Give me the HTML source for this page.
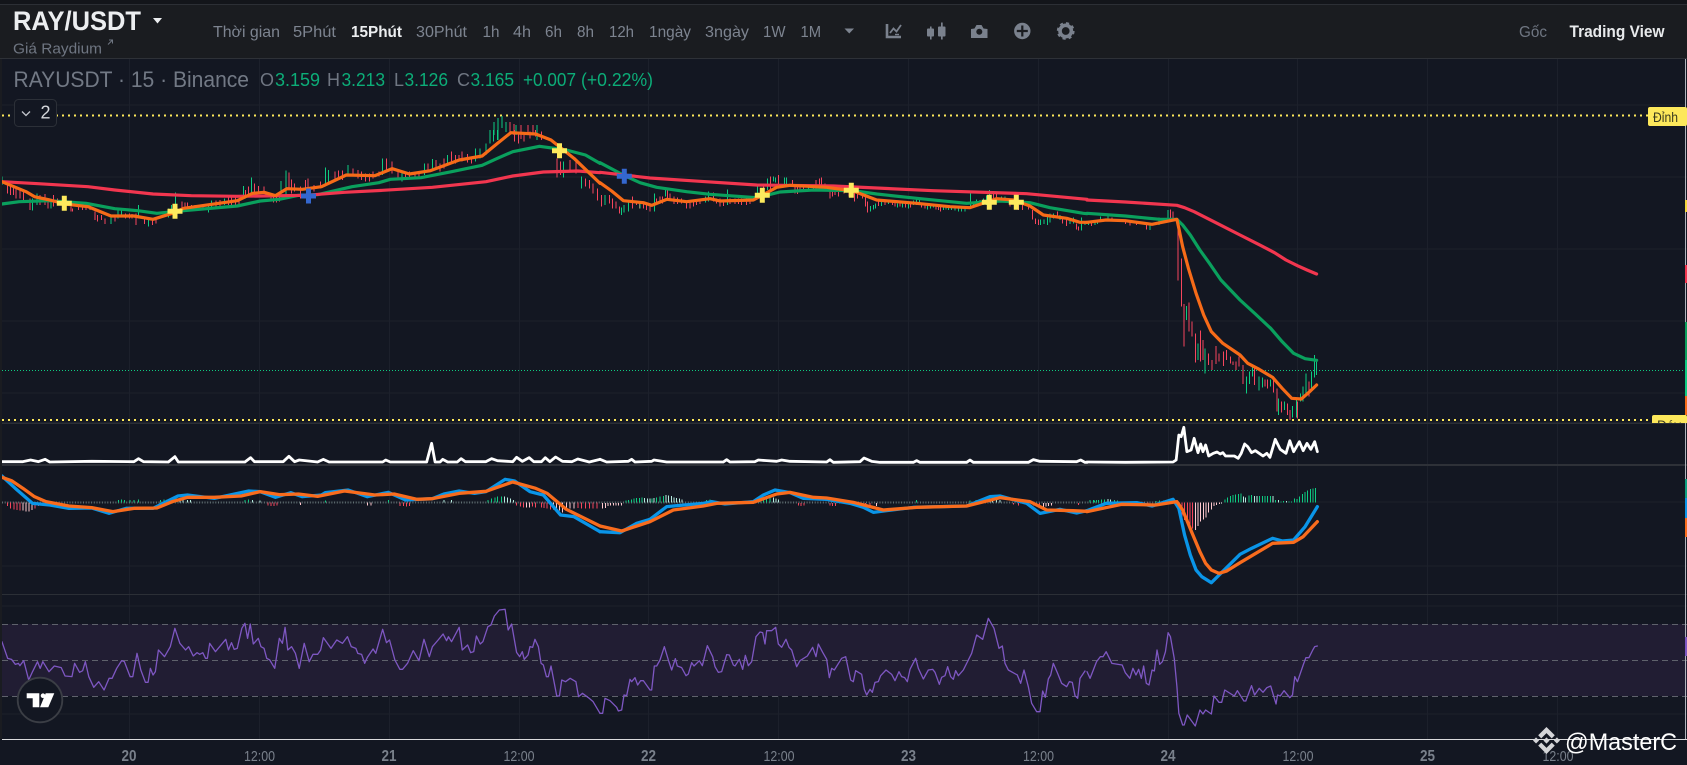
<!DOCTYPE html>
<html lang="vi">
<head>
<meta charset="utf-8">
<title>RAY/USDT</title>
<style>
html,body{margin:0;padding:0;background:#131722;width:1687px;height:765px;overflow:hidden}
svg{display:block}
text{font-family:"Liberation Sans","DejaVu Sans",sans-serif}
.t{font-size:16px;fill:#7d8490}
.a{font-size:15px;fill:#79808b;text-anchor:middle}
.d{font-size:16px;fill:#79808b;text-anchor:middle;font-weight:bold}
.l{font-size:18px;fill:#6f7682}
.g{font-size:18px;fill:#0cad78}
.ns{vector-effect:non-scaling-stroke;fill:none}
.ln{vector-effect:non-scaling-stroke;fill:none;stroke-linejoin:round;stroke-linecap:round}
</style>
</head>
<body>
<svg width="1687" height="765" viewBox="0 0 1687 765" xmlns="http://www.w3.org/2000/svg">
<defs><clipPath id="c1"><rect x="1640" y="410" width="47" height="13"/></clipPath></defs>
<rect width="1687" height="765" fill="#131722"/>

<!-- grid -->
<g stroke="#1c202b" stroke-width="1" shape-rendering="crispEdges">
<path d="M129.5 59V739M259.5 59V739M389.5 59V739M519.5 59V739M648.5 59V739M778.5 59V739M908.5 59V739M1038.5 59V739M1168.5 59V739M1297.5 59V739M1427.5 59V739M1557.5 59V739"/>
<path d="M2 105H1687M2 177H1687M2 249H1687M2 321H1687M2 393H1687M2 502H1687M2 566H1687M2 606H1687M2 642H1687M2 678H1687M2 714H1687"/>
</g>

<!-- RSI band -->
<rect x="2" y="624" width="1685" height="72" fill="#211d33"/>
<g stroke="#5f626c" stroke-width="1" stroke-dasharray="6 4" shape-rendering="crispEdges">
<path d="M2 624.5H1687M2 660.5H1687M2 696.5H1687"/>
</g>

<!-- price lines -->
<path d="M2 115.5H1650" stroke="#fde85b" stroke-width="2" stroke-dasharray="2 4"/>
<path d="M2 420H1654" stroke="#fde85b" stroke-width="2" stroke-dasharray="2 4"/>
<path d="M2 370.5H1685" stroke="#0ecb81" stroke-width="1" stroke-dasharray="1 2"/>

<!-- wicks zoom 3 coords -->
<g transform="translate(0,130) scale(.38265,.33333)" shape-rendering="crispEdges">
<path class="ns" stroke="#f6465d" d="M20 165V190M27 168V195M35 170V195M42 175V205M52 180V205M62 180V210M78 205V240M105 195V225M118 192V225M125 205V235M140 195V230M150 205V225M185 230V245M190 235V245M205 215V240M215 222V240M225 222V240M235 225V240M248 245V270M255 255V275M265 255V270M275 265V282M300 255V275M328 250V265M338 250V265M345 252V265M355 250V285M378 262V282M398 265V285M408 262V280M475 215V235M483 218V235M490 218V240M500 225V240M510 225V240M520 225V240M530 225V240M565 212V235M575 210V235M597 203V225M605 203V225M615 203V225M625 205V225M642 180V205M650 170V195M665 160V195M675 168V192M690 170V190M708 190V215M715 192V218M722 195V218M730 190V215M755 128V180M762 148V190M770 160V185M785 170V205M798 150V180M805 145V175M820 165V185M838 155V175M875 125V155M885 122V150M895 122V150M922 115V140M935 120V145M945 125V150M955 130V155M965 130V155M975 125V145M990 125V140M1010 85V125M1025 95V130M1040 120V145M1060 130V150M1070 125V148M1085 128V145M1095 125V140M1118 100V125M1140 90V120M1150 100V125M1160 85V115M1180 65V100M1190 75V100M1200 75V95M1208 65V95M1222 72V98M1232 80V100M1345 0V35M1355 10V40M1370 15V35M1385 5V25M1400 0V20M1415 5V30M1455 85V142M1465 95V135M1490 90V120M1505 95V130M1530 145V170M1540 150V175M1550 160V190M1562 175V212"/>
<path class="ns" stroke="#0ecb81" d="M5 140V165M85 205V242M97 190V225M133 205V235M290 262V282M308 240V265M318 240V262M362 225V265M388 265V290M440 235V262M448 225V250M458 187V255M545 228V248M553 212V235M587 205V225M637 168V200M657 142V195M735 153V190M747 122V195M850 112V170M858 120V165M910 105V140M1000 85V135M1050 125V155M1110 100V135M1130 87V125M1170 75V105M1242 55V95M1255 55V85M1270 40V75M1280 0V40M1290 0V35M1300 0V30M1472 95V142M1520 140V175"/>
</g>
<g shape-rendering="crispEdges">
<path stroke="#0ecb81" fill="none" d="M494 122V135M498 118V140M502 116V128M506 122V132M537 125V140M516 125V135"/>
<path stroke="#f6465d" fill="none" d="M510 122V135M514 124V135M521 125V139M528 125V135M533 125V135"/>
</g>
<!-- wicks zoom 7 coords -->
<g transform="translate(600,130) scale(.33333)" shape-rendering="crispEdges">
<path class="ns" stroke="#f6465d" d="M5 195V230M28 195V220M38 205V235M48 215V235M58 230V250M97 200V235M110 212V225M118 218V235M130 220V235M140 222V240M150 225V245M170 205V225M180 200V220M188 200V220M203 180V210M210 190V210M222 200V222M232 202V222M245 205V220M260 212V235M270 210V235M280 210V230M290 208V225M300 208V222M340 188V215M350 205V220M360 205V230M370 208V228M390 205V222M405 205V222M415 205V222M425 205V225M440 205V225M450 205V222M490 160V195M511 140V178M535 135V175M577 150V170M585 168V190M592 165V192M600 165V185M610 168V185M640 165V180M648 150V175M658 145V175M665 143V170M675 160V180M690 175V205M698 175V200M705 178V195M715 180V200M732 175V190M747 170V200M763 180V215M772 185V205M787 185V205M797 190V230M803 215V248M835 210V228M855 210V225M878 215V225M885 215V230M900 215V230M916 220V232M932 215V232M965 220V232M975 222V235M1008 222V238M1015 225V240M1022 228V245M1180 190V215M1190 192V212M1230 215V230M1255 225V240M1268 225V240M1285 225V238M1297 240V268M1306 265V282M1315 268V285M1372 245V265M1388 265V280M1400 265V288M1430 280V298M1436 290V302M1475 275V288"/>
<path class="ns" stroke="#0ecb81" d="M15 195V225M64 232V255M72 225V248M85 210V245M120 218V235M163 190V245M197 178V200M316 200V218M325 185V215M382 178V225M472 165V200M503 145V180M520 140V155M527 142V158M553 142V170M560 142V165M625 168V180M811 228V245M820 225V238M826 220V235M845 212V228M865 208V222M892 220V232M908 218V232M925 220V235M940 212V225M950 205V225M958 205V222M983 225V238M992 222V235M1000 222V232M1030 225V240M1038 228V238M1046 228V240M1055 228V240M1065 228V242M1075 232V245M1085 232V245M1095 232V245M1111 190V235M1120 220V232M1130 208V228M1140 210V225M1150 205V225M1160 197V225M1168 180V215M1205 200V215M1215 200V218M1243 215V235M1322 268V285M1332 268V282M1342 255V285M1350 250V278M1360 250V265M1380 255V270M1410 265V282M1420 262V280M1444 262V302M1455 275V285M1465 275V285M1485 275V285M1492 270V282"/>
</g>
<!-- wicks zoom 4 coords -->
<g transform="translate(1087,180) scale(.38265,.33333)" shape-rendering="crispEdges">
<path class="ns" stroke="#f6465d" d="M65 112V125M100 120V132M112 122V137M130 125V135M155 130V148M218 88V122M225 95V118M238 135V302M247 235V380M254 372V500M267 368V455M275 425V470M283 460V548M297 452V545M303 480V540M317 520V555M327 540V570M337 498V552M345 520V545M357 515V558M365 510V540M375 530V550M382 545V555M390 545V570M397 530V560M408 555V612M438 565V615M465 598V620M472 598V625M487 600V638M497 625V695M508 665V698M524 670V705M530 690V720M550 665V715M580 605V650"/>
<path class="ns" stroke="#0ecb81" d="M35 110V125M55 105V125M165 130V150M188 112V135M212 90V115M260 378V420M290 490V540M309 505V580M417 590V640M425 575V612M432 555V590M450 590V632M458 592V622M480 598V620M501 655V705M516 665V690M537 678V712M547 655V712M558 640V665M565 620V665M572 580V650M587 575V625M595 525V592M600 545V585"/>
</g>

<!-- moving averages -->
<g stroke="#0aa05d" stroke-width="3.2">
<polyline class="ln" transform="translate(0,130) scale(.38265,.33333)" points="5,222 50,215 130,212 225,220 300,236 360,242 410,250 480,242 620,228 680,213 730,208 780,196 830,194 920,170 990,158 1020,148 1100,143 1180,125 1260,106 1300,85 1340,65 1410,49 1480,60 1530,75 1568,100"/>
<polyline class="ln" transform="translate(600,130) scale(.33333)" points="0,98 70,135 120,158 170,172 260,185 330,193 470,203 540,186 640,180 760,182 830,192 950,205 1100,220 1200,213 1290,218 1350,233 1450,250 1461,251"/>
<polyline class="ln" transform="translate(1087,180) scale(.38265,.33333)" points="0,100 100,108 190,118 235,118 250,135 270,165 295,210 320,250 350,300 400,360 440,402 480,445 510,485 540,520 570,536 600,541"/>
</g>
<g stroke="#f2364f" stroke-width="3.2">
<polyline class="ln" transform="translate(0,130) scale(.38265,.33333)" points="5,155 100,161 230,170 300,180 400,192 500,197 620,199 800,196 900,187 1000,181 1130,172 1270,155 1340,138 1420,126 1510,123 1568,128"/>
<polyline class="ln" transform="translate(600,130) scale(.33333)" points="0,127 150,144 300,154 470,165 700,168 1000,182 1280,191 1461,208"/>
<polyline class="ln" transform="translate(1087,180) scale(.38265,.33333)" points="0,60 100,66 235,76 255,83 280,95 340,130 400,165 450,194 490,218 520,240 550,257 575,270 600,282"/>
</g>
<g stroke="#f76b18" stroke-width="3.2">
<polyline class="ln" transform="translate(0,130) scale(.38265,.33333)" points="5,155 68,185 90,200 130,210 170,222 230,230 290,258 350,258 400,268 450,250 480,235 620,212 660,190 690,187 720,197 750,176 790,178 840,170 905,135 980,137 1025,116 1070,132 1125,122 1200,90 1260,78 1300,40 1335,8 1400,12 1440,30 1500,85 1568,160"/>
<polyline class="ln" transform="translate(600,130) scale(.33333)" points="0,158 35,183 70,212 130,218 155,226 200,208 260,215 330,206 360,213 460,210 530,172 570,166 680,172 760,183 830,210 950,220 1050,230 1110,233 1190,206 1240,210 1290,228 1330,255 1400,265 1440,277 1461,277"/>
<polyline class="ln" transform="translate(1087,180) scale(.38265,.33333)" points="0,127 50,120 100,122 170,133 235,118 240,145 250,200 265,265 285,340 305,405 325,455 355,490 400,525 420,550 450,568 485,592 510,625 535,655 560,657 580,637 600,615"/>
</g>

<!-- crosses -->
<path fill="none" stroke="#fdea5d" stroke-width="5" d="M56.8 203.3h15M64.3 195.8v15M167.5 211.3h15M175 203.8v15M552 150.7h15M559.5 143.2v15M754.8 195.3h15M762.3 187.8v15M843.8 190.3h15M851.3 182.8v15M981.8 202.3h15M989.3 194.8v15M1008.8 202.3h15M1016.3 194.8v15"/>
<path fill="none" stroke="#3467cf" stroke-width="5" d="M301 196h15M308.5 188.5v15M616.8 176.3h15M624.3 168.8v15"/>

<!-- volume line -->
<g stroke="#ffffff" stroke-width="2.8">
<polyline class="ln" transform="translate(0,420) scale(.38265,.33333)" points="5,125 40,125 60,125 80,120 100,125 118,118 130,126 240,124 350,125 362,116 375,125 440,126 457,110 466,126 640,126 655,113 665,125 740,125 755,109 770,125 782,120 830,126 845,118 860,126 1000,126 1008,120 1020,126 1115,126 1128,70 1137,126 1150,126 1157,118 1170,126 1195,126 1205,116 1216,125 1270,125 1285,116 1300,122 1340,125 1350,112 1365,124 1383,113 1395,125 1415,125 1425,113 1437,125 1452,111 1470,124 1495,125 1510,117 1540,126 1568,118"/>
<polyline class="ln" transform="translate(600,420) scale(.33333)" points="0,118 20,126 85,124 95,118 105,126 155,124 162,120 200,126 370,126 380,119 390,126 465,125 475,120 500,122 530,124 545,120 570,124 680,126 690,119 700,127 780,125 792,114 815,124 840,127 940,127 950,122 960,127 1100,127 1110,120 1120,127 1285,127 1300,119 1320,124 1430,125 1442,120 1455,127 1461,127"/>
<polyline class="ln" transform="translate(1087,420) scale(.38265,.33333)" points="0,126 100,127 225,126 233,120 240,45 246,50 253,22 261,95 272,90 280,55 290,98 297,72 303,95 310,75 318,108 330,100 340,96 348,102 355,98 362,108 385,108 395,115 403,100 412,72 420,80 430,98 440,92 450,100 460,108 470,100 478,112 492,58 505,88 520,100 530,62 540,95 555,65 565,92 575,70 585,88 595,65 602,95"/>
</g>

<!-- separators -->
<rect x="2" y="422.5" width="1685" height="1.5" fill="#2b2f36"/>
<rect x="2" y="464" width="1685" height="2" fill="#2e3138"/>
<rect x="2" y="594" width="1685" height="1" fill="#2b2f36"/>

<!-- MACD histogram -->
<path d="M2 502.5H1170" stroke="#9db5b0" stroke-opacity=".55" stroke-width="2" stroke-dasharray="1 1.7"/>
<g transform="translate(0,420) scale(.38265,.33333)" shape-rendering="crispEdges">
<path class="ns" stroke="#f6465d" d="M20 247V258M28 247V265M36 247V268M44 247V270M52 247V271M92 247V266M100 247V258M1045 247V258M1055 247V258M1062 247V260M1070 247V258M1350 247V256M1360 247V260M1368 247V262M1392 247V260M1400 247V262M1415 247V262M1422 247V264M1430 247V266M1438 247V268M1510 247V264M1520 247V266M1530 247V266M1540 247V266M1550 247V266M1560 247V266M700 247V256M708 247V258M716 247V258M724 247V256"/>
<path class="ns" stroke="#ffc9cf" d="M60 247V272M68 247V274M76 247V274M84 247V270M1376 247V262M1384 247V262M1446 247V268M1454 247V268M1462 247V272M1470 247V278M1480 247V270M1490 247V266M1500 247V265M785 247V255M960 247V256M970 247V256"/>
<path class="ns" stroke="#0ecb81" d="M310 247V240M318 247V239M326 247V240M340 247V240M350 247V240M362 247V239M420 247V240M428 247V238M436 247V238M445 247V236M452 247V234M460 247V232M640 247V240M650 247V238M850 247V241M1015 247V240M1275 247V240M1285 247V236M1293 247V232M1300 247V230M1310 247V229"/>
<path class="ns" stroke="#b5ece0" d="M470 247V236M478 247V240M490 247V240M498 247V240M660 247V240M680 247V242M1160 247V240M1180 247V240M1318 247V230M1326 247V232M1334 247V236M1342 247V240"/>
</g>
<g transform="translate(600,420) scale(.33333)" shape-rendering="crispEdges">
<path class="ns" stroke="#ffc9cf" d="M8 249V266M16 249V264M24 249V258M32 249V257M40 249V256M48 249V256M56 249V256M64 249V256M830 249V258M1330 249V262M1338 249V260M1346 249V258M1354 249V256"/>
<path class="ns" stroke="#f6465d" d="M595 249V256M603 249V258M612 249V256M690 249V256M698 249V258M706 249V258M780 249V256M796 249V258M810 249V260M1240 249V254M1256 249V256M1300 249V256M1318 249V260M1436 249V255"/>
<path class="ns" stroke="#0ecb81" d="M78 247V242M86 247V240M94 247V238M102 247V235M110 247V234M118 247V234M126 247V233M156 247V235M170 247V232M180 247V230M190 247V228M320 247V240M330 247V238M480 247V238M490 247V236M500 247V234M510 247V232M950 247V240M1110 247V242M1128 247V240M1140 247V238M1148 247V236M1160 247V234M1470 247V240M1480 247V240M1490 247V240"/>
<path class="ns" stroke="#b5ece0" d="M134 247V234M142 247V235M150 247V236M162 247V234M198 247V225M206 247V226M214 247V228M222 247V232M230 247V234M238 247V235M246 247V238M520 247V232M528 247V235M536 247V238M1170 247V236M1178 247V238M1190 247V238M1200 247V240"/>
</g>
<g transform="translate(1087,420) scale(.38265,.33333)" shape-rendering="crispEdges">
<path class="ns" stroke="#0ecb81" d="M20 247V241M30 247V240M38 247V238M46 247V238M72 247V240M80 247V242M180 247V243M190 247V242M200 247V241M210 247V239"/>
<path class="ns" stroke="#b5ece0" d="M55 247V237M62 247V238"/>
<path class="ns" stroke="#f6465d" d="M130 248V252M150 248V252M160 248V252"/>
</g>
<g transform="translate(1160,470) scale(.33333)" shape-rendering="crispEdges" stroke-width="1">
<path class="ns" stroke="#f6465d" d="M50 97V110M58 97V125M66 97V140M74 97V150M82 97V155M90 97V165M98 97V175"/>
<path class="ns" stroke="#ffc9cf" d="M106 97V180M114 97V168M122 97V155M130 97V148M138 97V142M146 97V128M154 97V118M162 97V108M170 97V105M178 97V102"/>
<path class="ns" stroke="#fff" d="M184 97V101"/>
<path class="ns" stroke="#0ecb81" d="M195 97V88M203 97V82M211 97V78M219 97V75M227 97V73M235 97V72M243 97V71M267 97V77M275 97V75M299 97V78M307 97V78M315 97V78M323 97V78M331 97V78M347 97V90M363 97V94M371 97V93M387 97V95M395 97V95M403 97V86M411 97V87M419 97V80M427 97V72M435 97V66M443 97V62M451 97V57M459 97V55M467 97V54"/>
<path class="ns" stroke="#b5ece0" d="M251 97V80M256 97V82M283 97V78M291 97V78M339 97V78M355 97V90M379 97V93"/>
</g>

<!-- MACD lines -->
<g stroke="#0a95e8" stroke-width="3.3">
<polyline class="ln" transform="translate(0,420) scale(.38265,.33333)" points="5,168 40,205 85,250 130,255 180,265 240,264 285,280 330,265 400,265 465,228 490,225 560,235 650,213 680,215 720,232 760,218 790,230 840,225 850,218 910,210 960,230 1015,217 1060,240 1130,236 1160,222 1200,213 1240,220 1270,215 1320,178 1345,183 1385,215 1420,225 1465,285 1500,290 1530,310 1568,335"/>
<polyline class="ln" transform="translate(600,420) scale(.33333)" points="0,335 60,338 110,310 150,298 200,260 240,256 310,250 335,245 375,252 460,245 490,225 525,210 570,218 610,235 680,238 750,250 790,262 820,277 860,272 940,262 1100,258 1170,230 1200,228 1280,250 1320,280 1380,268 1430,279 1461,272"/>
<polyline class="ln" transform="translate(1087,420) scale(.38265,.33333)" points="0,272 50,250 130,248 170,258 225,238 240,265 255,345 270,405 285,450 300,470 325,488 400,403 430,385 485,355 510,363 540,360 570,320 602,260"/>
</g>
<g stroke="#f96c1d" stroke-width="3.3">
<polyline class="ln" transform="translate(0,420) scale(.38265,.33333)" points="5,172 30,182 60,205 90,230 120,245 180,258 240,263 295,275 350,265 410,264 450,245 490,232 560,232 630,228 680,215 730,224 780,222 830,229 900,213 980,225 1030,222 1090,238 1130,236 1200,220 1270,214 1340,186 1400,205 1430,220 1480,268 1568,318"/>
<polyline class="ln" transform="translate(600,420) scale(.33333)" points="0,318 65,333 150,305 220,270 310,258 350,250 460,247 530,222 570,217 640,232 680,234 760,247 850,270 950,262 1100,258 1200,233 1290,245 1340,270 1420,272 1461,274"/>
<polyline class="ln" transform="translate(1087,420) scale(.38265,.33333)" points="0,275 90,253 180,255 235,245 250,270 275,340 295,395 310,430 325,450 345,460 365,453 400,428 485,370 540,367 565,350 602,305"/>
</g>

<!-- RSI -->
<g stroke="#7e57c2" stroke-width="1.3">
<polyline class="ln" transform="translate(0,420) scale(.38265,.33333)" points="5,665 20,715 30,718 40,733 48,730 52,737 62,722 75,780 85,755 98,725 105,745 112,725 128,755 142,738 160,743 170,768 188,770 195,730 208,757 216,752 223,725 232,770 245,802 258,785 272,810 285,775 293,775 305,745 318,722 325,725 340,770 347,770 358,700 368,750 380,787 387,787 393,745 400,765 406,755 414,690 430,710 445,680 457,625 470,670 485,690 493,680 505,708 515,698 522,703 530,698 537,715 542,715 548,670 563,695 590,658 597,690 605,668 612,688 620,685 632,625 640,610 647,655 654,612 662,672 675,655 682,680 690,685 697,715 705,720 718,745 730,655 738,670 745,622 752,690 762,680 772,700 782,745 795,670 808,725 818,703 830,703 838,690 845,653 865,685 880,660 895,670 908,650 918,680 930,685 935,700 945,703 953,730 960,712 975,687 982,700 1000,628 1010,668 1018,660 1032,720 1045,748 1052,748 1065,730 1080,692 1095,722 1108,658 1122,710 1130,680 1145,660 1158,642 1167,662 1172,650 1180,665 1200,622 1208,690 1222,675 1230,698 1238,695 1245,648 1255,672 1262,665 1275,620 1283,615 1292,588 1305,570 1320,568 1328,630 1337,612 1350,697 1358,710 1365,695 1370,718 1380,705 1385,680 1392,682 1398,658 1407,680 1414,730 1420,735 1428,770 1433,770 1440,738 1455,828 1462,828 1468,780 1478,785 1490,775 1505,785 1512,830 1522,820 1540,835 1550,845 1568,880"/>
<polyline class="ln" transform="translate(600,420) scale(.33333)" points="0,880 8,880 15,835 30,842 50,862 55,873 65,870 72,825 80,827 90,778 95,785 105,773 113,795 122,782 130,782 150,810 155,810 163,738 170,738 180,720 193,680 205,720 215,750 226,716 232,738 245,743 258,767 265,762 275,728 282,738 298,722 307,737 322,677 338,710 345,740 355,757 365,755 380,704 388,705 400,735 405,738 418,718 428,748 436,706 445,737 455,725 468,650 480,636 488,638 495,672 500,632 515,632 527,622 535,672 545,682 558,658 567,682 575,690 590,740 600,722 622,708 638,682 648,710 655,672 668,697 680,718 688,773 695,745 703,750 725,715 737,710 752,780 760,785 767,752 785,763 793,808 800,825 810,808 817,817 825,787 835,785 842,767 858,750 875,763 885,782 897,755 905,770 914,773 922,785 930,748 947,715 955,745 970,777 985,750 998,748 1005,757 1018,793 1025,772 1035,767 1043,740 1052,770 1060,778 1067,752 1075,767 1090,750 1115,700 1130,645 1148,658 1165,595 1182,625 1197,685 1207,678 1215,730 1225,750 1252,765 1262,790 1272,750 1285,800 1295,850 1310,875 1320,875 1328,813 1336,832 1345,777 1352,765 1360,730 1372,758 1385,790 1400,800 1408,785 1417,787 1425,827 1433,835 1440,775 1455,753"/>
<polyline class="ln" transform="translate(1087,420) scale(.38265,.33333)" points="0,755 8,775 25,725 35,710 42,710 50,695 65,730 92,735 100,758 112,775 120,745 128,765 135,748 142,775 148,738 155,790 162,795 170,750 176,753 183,690 190,733 197,725 205,695 212,638 218,650 228,715 235,800 240,880 250,915 254,915 262,885 283,918 295,870 303,882 310,870 325,882 332,828 345,847 352,847 360,810 385,828 393,812 410,843 415,843 430,797 438,825 450,805 460,817 470,803 480,798 494,852 498,825 505,828 515,812 530,833 537,825 543,770 550,785 565,735 572,713 580,713 590,690 595,680 602,678"/>
</g>

<!-- right edge -->
<rect x="1685" y="59" width="1" height="680" fill="#aeb2ba"/>
<rect x="1685" y="200" width="2" height="12" fill="#f4d63c"/>
<rect x="1685" y="265" width="2" height="18" fill="#f2364f"/>
<rect x="1685" y="322" width="2" height="38" fill="#0aa05d"/>
<rect x="1685" y="360" width="2" height="36" fill="#0ecb81"/>
<rect x="1685" y="396" width="2" height="19" fill="#f76b18"/>
<rect x="1685" y="479" width="2" height="19" fill="#0e9f80"/>
<rect x="1685" y="498" width="2" height="20" fill="#0a95e8"/>
<rect x="1685" y="518" width="2" height="19" fill="#f96c1d"/>
<rect x="1685" y="637" width="2" height="19" fill="#7e57c2"/>
<rect x="0" y="59" width="2" height="680" fill="#1a1c21"/>

<!-- price tags -->
<rect x="1648" y="107" width="39" height="19" rx="2" fill="#fde85b"/>
<text x="1653" y="122" font-size="13.500" fill="#3a3a1f" textLength="25" lengthAdjust="spacingAndGlyphs">Đỉnh</text>
<g clip-path="url(#c1)">
<rect x="1652" y="415" width="35" height="19" rx="2" fill="#fde85b"/>
<text x="1657" y="430" font-size="13.500" fill="#3a3a1f">Đáy</text>
</g>

<!-- axis -->
<rect x="2" y="739" width="1685" height="1" fill="#d9dadc"/>
<text class="d" x="129" y="761" textLength="15" lengthAdjust="spacingAndGlyphs">20</text>
<text class="a" x="259.500" y="761" textLength="31" lengthAdjust="spacingAndGlyphs">12:00</text>
<text class="d" x="389" y="761" textLength="15" lengthAdjust="spacingAndGlyphs">21</text>
<text class="a" x="519" y="761" textLength="31" lengthAdjust="spacingAndGlyphs">12:00</text>
<text class="d" x="648.500" y="761" textLength="15" lengthAdjust="spacingAndGlyphs">22</text>
<text class="a" x="779" y="761" textLength="31" lengthAdjust="spacingAndGlyphs">12:00</text>
<text class="d" x="908.500" y="761" textLength="15" lengthAdjust="spacingAndGlyphs">23</text>
<text class="a" x="1038.500" y="761" textLength="31" lengthAdjust="spacingAndGlyphs">12:00</text>
<text class="d" x="1168" y="761" textLength="15" lengthAdjust="spacingAndGlyphs">24</text>
<text class="a" x="1298" y="761" textLength="31" lengthAdjust="spacingAndGlyphs">12:00</text>
<text class="d" x="1427.500" y="761" textLength="15" lengthAdjust="spacingAndGlyphs">25</text>
<text class="a" x="1558" y="761" textLength="31" lengthAdjust="spacingAndGlyphs">12:00</text>

<!-- toolbar -->
<rect x="0" y="0" width="1687" height="4" fill="#13151a"/>
<rect x="0" y="4" width="1687" height="54" fill="#1a1c20"/>
<rect x="0" y="4" width="1687" height="1" fill="#2c2f35"/>
<rect x="0" y="58" width="1687" height="1" fill="#2e3137"/>
<text x="13" y="30" font-size="27" font-weight="bold" fill="#eceef0" textLength="128" lengthAdjust="spacingAndGlyphs">RAY/USDT</text>
<path d="M153 18h9l-4.500 5.500z" fill="#eceef0"/>
<text x="13" y="53.500" font-size="15" fill="#6f7682" textLength="89" lengthAdjust="spacingAndGlyphs">Giá Raydium</text>
<path d="M108 44.500l4.500-4.500M109 40h3.500v3.500" stroke="#6f7682" fill="none" stroke-width="1"/>

<text class="t" x="213" y="37" textLength="67" lengthAdjust="spacingAndGlyphs">Thời gian</text>
<text class="t" x="293" y="37" textLength="43" lengthAdjust="spacingAndGlyphs">5Phút</text>
<text class="t" x="351" y="37" textLength="51" lengthAdjust="spacingAndGlyphs" style="fill:#eceef0;font-weight:bold">15Phút</text>
<text class="t" x="416" y="37" textLength="51" lengthAdjust="spacingAndGlyphs">30Phút</text>
<text class="t" x="482.500" y="37" textLength="17" lengthAdjust="spacingAndGlyphs">1h</text>
<text class="t" x="513" y="37" textLength="18" lengthAdjust="spacingAndGlyphs">4h</text>
<text class="t" x="545" y="37" textLength="17" lengthAdjust="spacingAndGlyphs">6h</text>
<text class="t" x="577" y="37" textLength="17" lengthAdjust="spacingAndGlyphs">8h</text>
<text class="t" x="609" y="37" textLength="25" lengthAdjust="spacingAndGlyphs">12h</text>
<text class="t" x="649" y="37" textLength="42" lengthAdjust="spacingAndGlyphs">1ngày</text>
<text class="t" x="705" y="37" textLength="44" lengthAdjust="spacingAndGlyphs">3ngày</text>
<text class="t" x="763" y="37" textLength="22.500" lengthAdjust="spacingAndGlyphs">1W</text>
<text class="t" x="800.500" y="37" textLength="20.500" lengthAdjust="spacingAndGlyphs">1M</text>
<path d="M844.500 28.500h9.500l-4.750 5z" fill="#7d8490"/>

<!-- toolbar icons -->
<g fill="#7a818d" stroke="none">
<path d="M887 24V37H901" fill="none" stroke="#7a818d" stroke-width="2.600"/>
<path d="M890 33L893.500 28.500L896.500 31.500L901 25" fill="none" stroke="#7a818d" stroke-width="1.800"/>
<path d="M895 34.500H899" stroke="#7a818d" stroke-width="1.400"/>
<rect x="927" y="28.500" width="7" height="8" rx="1"/>
<rect x="930" y="26.500" width="1.600" height="13"/>
<rect x="938" y="26.500" width="7.500" height="10" rx="1"/>
<rect x="941" y="22.500" width="1.700" height="17"/>
<path d="M971 38V29l3.500-.500L976.500 25h5l2 3.500 4 .500V38z"/>
<circle cx="979.300" cy="31.800" r="3" fill="#1a1c20"/>
<circle cx="1022.300" cy="31" r="8.200"/>
<path d="M1022.300 25.500v11M1016.800 31h11" stroke="#1a1c20" stroke-width="2.200"/>
<circle cx="1065.700" cy="31" r="5.700" fill="none" stroke="#7a818d" stroke-width="3.600"/>
<circle cx="1065.700" cy="31" r="7.800" fill="none" stroke="#7a818d" stroke-width="2.200" stroke-dasharray="3.100 3.030"/>
</g>

<text x="1519" y="37" font-size="16" fill="#6f7682" textLength="28" lengthAdjust="spacingAndGlyphs">Gốc</text>
<text x="1569.500" y="37" font-size="16.500" font-weight="bold" fill="#e8eaec" textLength="95" lengthAdjust="spacingAndGlyphs">Trading View</text>

<!-- legend -->
<text x="13.500" y="87" font-size="22.500" fill="#727985" textLength="235.500" lengthAdjust="spacingAndGlyphs">RAYUSDT · 15 · Binance</text>
<text class="l" x="260" y="86" textLength="14" lengthAdjust="spacingAndGlyphs">O</text>
<text class="g" x="275" y="86" textLength="45" lengthAdjust="spacingAndGlyphs">3.159</text>
<text class="l" x="327" y="86" textLength="13" lengthAdjust="spacingAndGlyphs">H</text>
<text class="g" x="341.500" y="86" textLength="43.500" lengthAdjust="spacingAndGlyphs">3.213</text>
<text class="l" x="394" y="86" textLength="10" lengthAdjust="spacingAndGlyphs">L</text>
<text class="g" x="404.500" y="86" textLength="43.500" lengthAdjust="spacingAndGlyphs">3.126</text>
<text class="l" x="457" y="86" textLength="13" lengthAdjust="spacingAndGlyphs">C</text>
<text class="g" x="470.500" y="86" textLength="43.500" lengthAdjust="spacingAndGlyphs">3.165</text>
<text class="g" x="523" y="86" textLength="53" lengthAdjust="spacingAndGlyphs">+0.007</text>
<text class="g" x="581" y="86" textLength="72" lengthAdjust="spacingAndGlyphs">(+0.22%)</text>

<!-- collapse box -->
<rect x="14.500" y="99.500" width="42" height="27" rx="4" fill="#131722" stroke="#2c3038"/>
<path d="M22 111.500l4 4 4-4" fill="none" stroke="#c3c6cc" stroke-width="1.300"/>
<text x="40.500" y="118.500" font-size="18" fill="#d5d7db">2</text>
<path d="M2 115.500H14" stroke="#fde85b" stroke-width="2" stroke-dasharray="2 4"/>

<!-- TradingView logo -->
<circle cx="40" cy="700" r="22.300" fill="#131722" stroke="#3b3e45" stroke-width="1.800"/>
<path fill="#fff" d="M26.700 693.300H39.300V707.300H32.700V698.300H26.700zM45.700 693.300H54.300L48.300 707.300H40z"/>
<circle cx="43" cy="695.700" r="2.300" fill="#fff"/>

<!-- watermark -->
<path transform="translate(1533,727) scale(.213)" fill="#d4d5d8" d="M38.730 53.200l24.590-24.580 24.600 24.600 14.300-14.310L63.320 0 24.420 38.900l14.310 14.300zM0 63.310l14.300-14.310 14.310 14.310-14.310 14.300zM38.730 73.410l24.590 24.590 24.600-24.600 14.310 14.290-38.900 38.910-38.910-38.880-.02-.02zM98 63.310l14.300-14.310 14.310 14.300-14.310 14.320zM77.830 63.300L63.320 48.780 52.590 59.510l-1.240 1.230-2.540 2.540 14.510 14.500 14.510-14.470z"/>
<text x="1565" y="750" font-size="24" fill="#ffffff" textLength="112" lengthAdjust="spacingAndGlyphs">@MasterC</text>
</svg>
</body>
</html>
